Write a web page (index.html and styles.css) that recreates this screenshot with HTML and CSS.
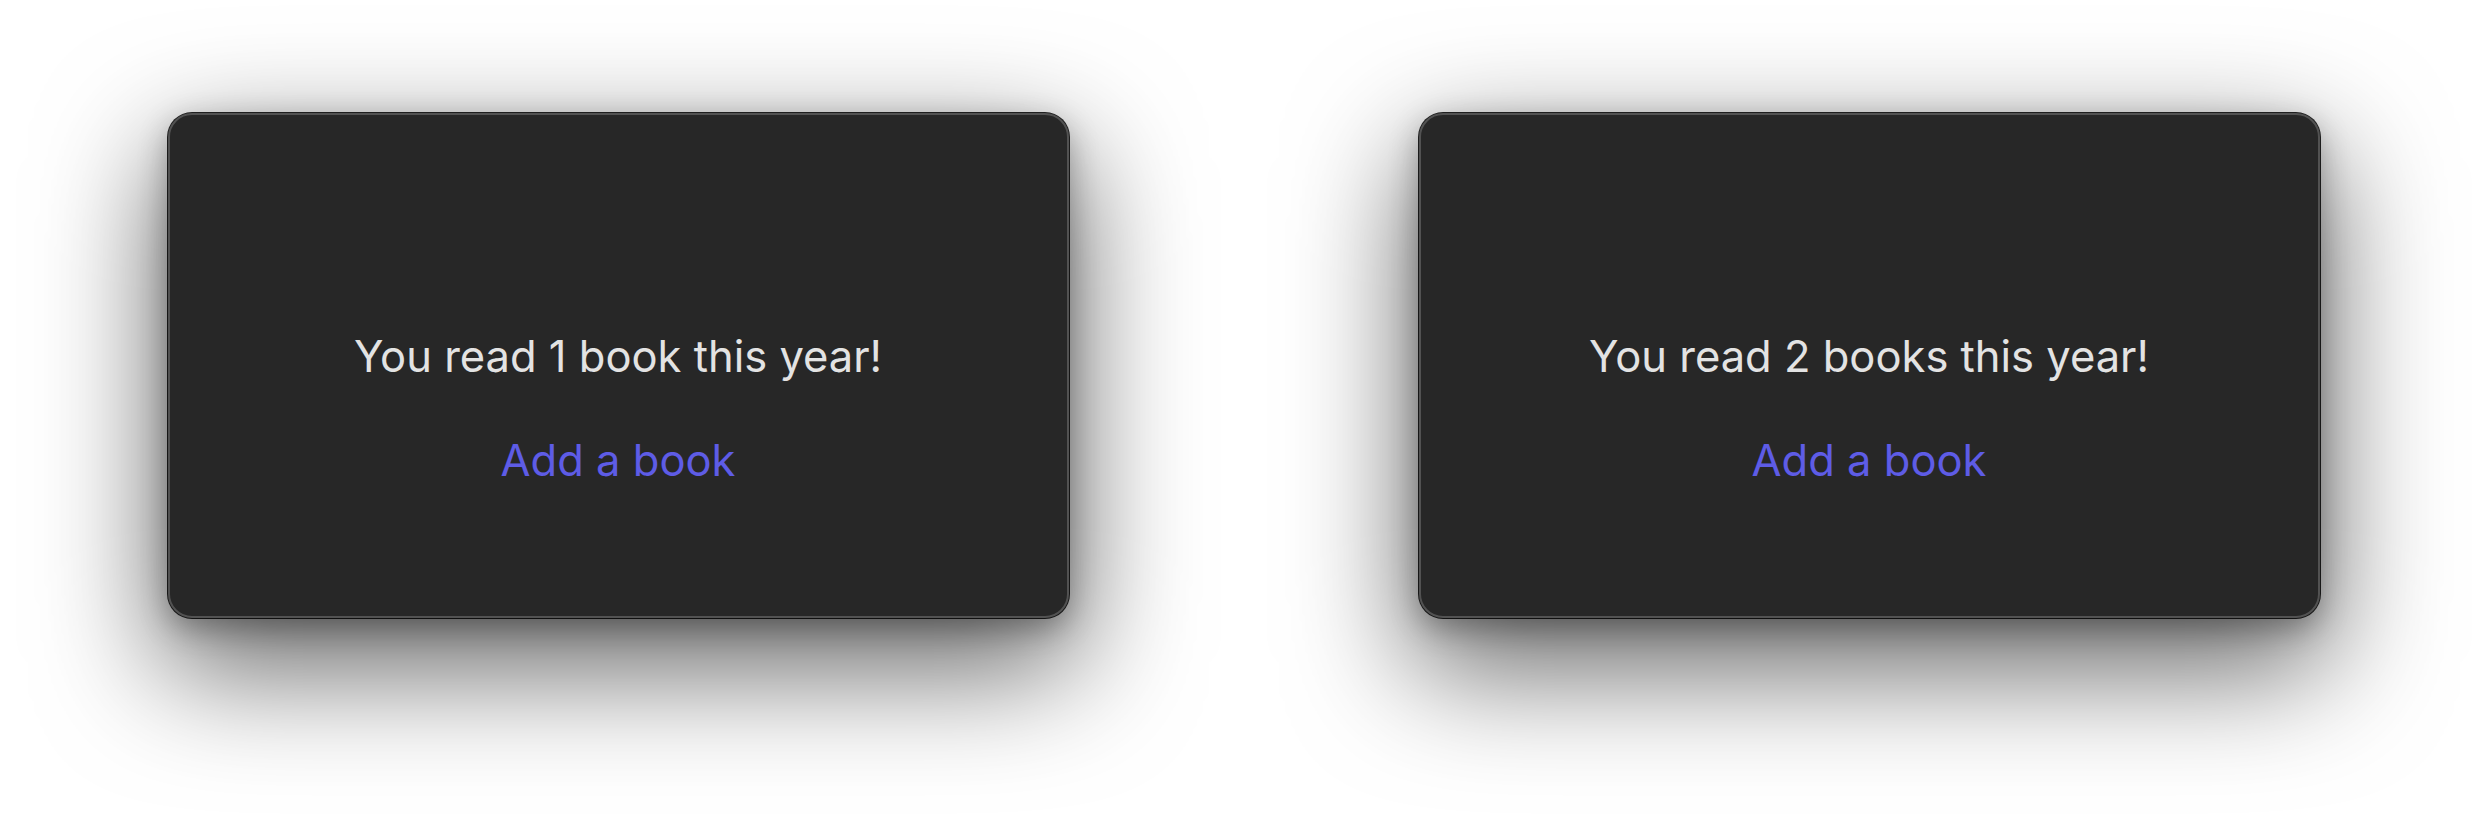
FILE: index.html
```html
<!DOCTYPE html>
<html lang="en">
<head>
<meta charset="utf-8">
<title>Books</title>
<link rel="stylesheet" href="styles.css">
</head>
<body>
  <main class="stage">
    <section class="window">
      <p class="count">You read 1 book this year!</p>
      <a class="add" href="#">Add a book</a>
    </section>
    <section class="window">
      <p class="count">You read 2 books this year!</p>
      <a class="add" href="#">Add a book</a>
    </section>
  </main>
</body>
</html>
```

FILE: styles.css
```css
html, body {
  margin: 0;
  padding: 0;
  background: #ffffff;
}

body {
  width: 2487px;
  height: 840px;
  overflow: hidden;
  font-family: Inter, "Noto Sans", "Liberation Sans", sans-serif;
}

.stage {
  display: flex;
  justify-content: center;
  align-items: flex-start;
  gap: 350px;
  padding-top: 113px;
}

.window {
  box-sizing: border-box;
  width: 901px;
  height: 505px;
  border-radius: 24px;
  background: #272727;
  border: 2px solid #525252;
  box-shadow:
    0 0 0 1px rgba(0, 0, 0, 0.85),
    0 44px 120px 8px rgba(0, 0, 0, 0.6),
    0 10px 30px rgba(0, 0, 0, 0.3);
  display: flex;
  flex-direction: column;
  align-items: center;
  justify-content: center;
  padding-top: 85px;
  gap: 51px;
}

.count {
  margin: 0;
  font-size: 43.5px;
  line-height: 53px;
  color: #e3e3e3;
  font-weight: 400;
}

.add {
  font-size: 43.5px;
  line-height: 53px;
  color: #5e5ce6;
  text-decoration: none;
  font-weight: 400;
}
```
